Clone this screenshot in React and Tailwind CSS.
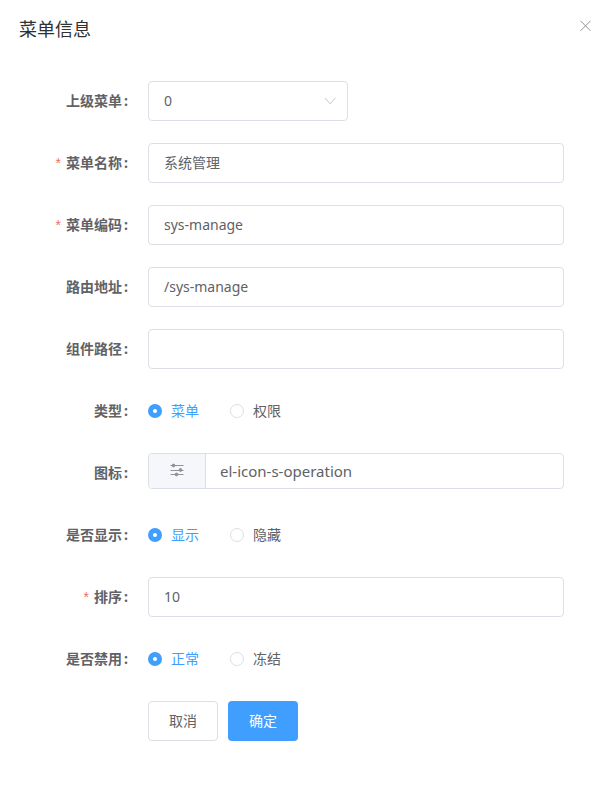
const font = { fontFamily: '"Noto Sans", "Noto Sans CJK SC", sans-serif' };

function Row({ label, required, children }) {
  return (
    <div className="flex mb-[22px]">
      <label className="w-[128px] h-10 shrink-0 flex items-center justify-end text-sm font-bold text-[#606266]">
        {required && <span className="text-[#f56c6c] mr-[5px] font-normal font-['Liberation_Sans']">*</span>}
        {label}
        <span className="ml-0.5">:</span>
      </label>
      <div className="ml-5 flex-1 min-w-0">{children}</div>
    </div>
  );
}

function TextBox({ value }) {
  return (
    <div className="h-10 border border-[#dcdfe6] rounded px-[15px] flex items-center text-sm text-[#606266] bg-white">
      {value}
    </div>
  );
}

function Radio({ label, checked }) {
  return (
    <div className="flex items-center mr-[31px]">
      {checked ? (
        <span className="w-[14px] h-[14px] rounded-full bg-[#409eff] flex items-center justify-center">
          <span className="w-1 h-1 rounded-full bg-white" />
        </span>
      ) : (
        <span className="w-[14px] h-[14px] rounded-full border border-[#dcdfe6] bg-white" />
      )}
      <span className={"pl-[9px] text-sm " + (checked ? "text-[#409eff]" : "text-[#606266]")}>{label}</span>
    </div>
  );
}

function Radios({ a, b }) {
  return (
    <div className="h-10 flex items-center">
      <Radio label={a} checked />
      <Radio label={b} />
    </div>
  );
}

export default function App() {
  return (
    <div className="w-[612px] h-[792px] bg-white relative overflow-hidden" style={font}>
      <div className="px-5 pt-[17px] h-[81px] text-lg leading-6 text-[#303133] -ml-px">菜单信息</div>
      <button className="absolute left-[580px] top-[20px] w-[11px] h-[11px] text-[#909399]" aria-label="close">
        <svg viewBox="0 0 11 11" width="11" height="11" fill="none" stroke="currentColor" strokeWidth="1">
          <path d="M0.5 0.8L10.5 10.8M10.5 0.8L0.5 10.8" />
        </svg>
      </button>
      <div className="pr-[48px]">
        <Row label="上级菜单">
          <div className="relative w-[200px] h-10 border border-[#dcdfe6] rounded px-[15px] flex items-center text-sm text-[#606266]">
            0
            <svg className="absolute right-[11px] top-[15px]" width="12" height="8" viewBox="0 0 12 8" fill="none" stroke="#c0c4cc" strokeWidth="1">
              <path d="M1 1L6.2 6.8L11.4 1" />
            </svg>
          </div>
        </Row>
        <Row label="菜单名称" required><TextBox value="系统管理" /></Row>
        <Row label="菜单编码" required><TextBox value="sys-manage" /></Row>
        <Row label="路由地址"><TextBox value="/sys-manage" /></Row>
        <Row label="组件路径"><TextBox value="" /></Row>
        <Row label="类型"><Radios a="菜单" b="权限" /></Row>
        <Row label="图标">
          <div className="h-9 flex border border-[#dcdfe6] rounded text-[15px] text-[#606266]">
            <div className="w-[57px] bg-[#f5f7fa] border-r border-[#dcdfe6] rounded-l flex items-center justify-center text-[#909399]">
              <svg className="-mt-[3px]" width="14" height="14" viewBox="0 0 14 14" fill="none" stroke="currentColor" strokeWidth="1">
                <path d="M0.5 2.5H13.5M0.5 7.5H13.5M0.5 11.5H13.5" />
                <circle cx="3.5" cy="2.5" r="1.4" fill="currentColor" />
                <circle cx="10.5" cy="7" r="1.4" fill="currentColor" />
                <circle cx="6.5" cy="11.5" r="1.4" fill="currentColor" />
              </svg>
            </div>
            <div className="px-[14px] flex items-center">el-icon-s-operation</div>
          </div>
        </Row>
        <Row label="是否显示"><Radios a="显示" b="隐藏" /></Row>
        <Row label="排序" required><TextBox value="10" /></Row>
        <Row label="是否禁用"><Radios a="正常" b="冻结" /></Row>
        <div className="flex pl-[148px] gap-[10px]">
          <button className="w-[70px] h-10 border border-[#dcdfe6] rounded bg-white text-sm text-[#606266]">取消</button>
          <button className="w-[70px] h-10 rounded bg-[#409eff] text-sm text-white">确定</button>
        </div>
      </div>
    </div>
  );
}
